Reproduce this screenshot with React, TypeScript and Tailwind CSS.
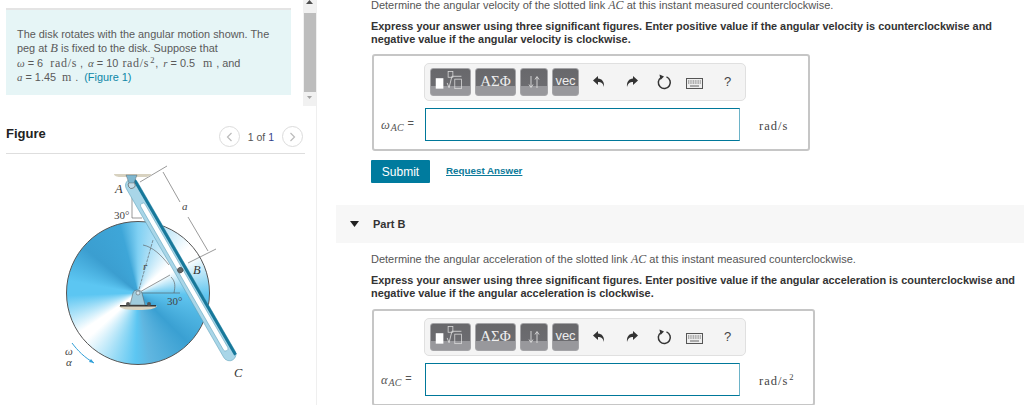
import React from "react";

const M = ({ children }: { children: React.ReactNode }) => (
  <span className="font-['Liberation_Serif',serif] italic">{children}</span>
);
const U = ({ children, cls }: { children: React.ReactNode; cls?: string }) => (
  <span className={`font-['Liberation_Serif',serif] text-[12px] tracking-[0.7px] ${cls ?? ""}`}>{children}</span>
);
const BigU = ({ children }: { children: React.ReactNode }) => (
  <span className="font-['Liberation_Serif',serif] text-[12.500px] tracking-[1px]">{children}</span>
);

function ToolBtn({ w, children }: { w: string; children: React.ReactNode }) {
  return (
    <div className={`${w} relative h-[28px] rounded-[3px] border border-[#a5a5a8] overflow-hidden bg-[linear-gradient(#68686b_0,#6c6c70_66%,#98989c_67%,#98989c_100%)] flex items-center justify-center text-[#eee] shrink-0`}>
      {children}
    </div>
  );
}

function Toolbar() {
  return (
    <div className="ml-[50px] w-[322px] h-[38px] rounded-[5px] border border-[#e0e0e0] bg-[#f4f4f4] flex items-center pl-[5px]">
      <div className="flex gap-[4px]">
        <ToolBtn w="w-[41px]">
          <svg width="41" height="28" viewBox="0 0 41 28">
            <rect x="5" y="10" width="8" height="11" fill="#fff" />
            <rect x="18" y="3" width="5" height="6" fill="none" stroke="#ddd" strokeWidth="0.8" />
            <path d="M17 15 l2 5 l3 -12 h10" fill="none" stroke="#ddd" strokeWidth="0.9" />
            <rect x="25" y="11" width="7" height="10" fill="none" stroke="#ddd" strokeWidth="0.8" />
          </svg>
        </ToolBtn>
        <ToolBtn w="w-[41px]">
          <span className="font-['Liberation_Serif',serif] text-[15px] -mt-[2px]">ΑΣΦ</span>
        </ToolBtn>
        <ToolBtn w="w-[28px]">
          <svg width="14" height="14" viewBox="0 0 14 14" fill="none" stroke="#ddd" strokeWidth="0.9">
            <path d="M4 1v11M2 9.500 4 12.500 6 9.500M10 13V2M8 4.500 10 1.500 12 4.500" />
          </svg>
        </ToolBtn>
        <ToolBtn w="w-[27px]">
          <span className="font-['Liberation_Sans',sans-serif] text-[13px] -mt-[3px]">vec</span>
        </ToolBtn>
      </div>
      <svg width="14" height="14" viewBox="0 0 14 14" className="ml-[13px]">
        <path d="M6 1 1 5.500 6 10V7c3 0 5 1 6 5 .5-5-2-8.500-6-8.500z" fill="#333" />
      </svg>
      <svg width="14" height="14" viewBox="0 0 14 14" className="ml-[19px]">
        <path d="M8 1l5 4.500L8 10V7c-3 0-5 1-6 5-.5-5 2-8.500 6-8.500z" fill="#333" />
      </svg>
      <svg width="16" height="16" viewBox="0 0 16 16" className="ml-[17px]" fill="none">
        <path d="M5 3.500a6 6 0 1 0 5.500-.6" stroke="#333" strokeWidth="1.500" />
        <path d="M3.500 0.500 8 2.500 4.500 6z" fill="#333" />
      </svg>
      <svg width="17" height="11" viewBox="0 0 17 11" className="ml-[14px] mt-[2px]">
        <rect x="0.500" y="0.500" width="16" height="10" fill="#eee" stroke="#555" />
        <path d="M2 3h13M2 5h13" stroke="#666" strokeDasharray="1 0.700" />
        <path d="M4 8h9" stroke="#666" />
      </svg>
      <span className="ml-[21px] font-['Liberation_Sans',sans-serif] text-[13px] text-[#444]">?</span>
    </div>
  );
}

function AnswerBox({ w, sym, unit }: { w: string; sym: string; unit: React.ReactNode }) {
  return (
    <div className={`${w} h-[97px] ml-px rounded-[3px] border-2 border-[#c6c6c6] pt-[7px] bg-white shrink-0`}>
      <Toolbar />
      <div className="flex items-center mt-[7px]">
        <div className="w-[51px] pl-[7px] text-[11px] text-[#555] whitespace-nowrap">
          <span className="font-['Liberation_Serif',serif] italic text-[12.500px]">{sym}</span>
          <span className="font-['Liberation_Serif',serif] italic text-[10px] align-[-2px] ml-[1px]">AC</span>
          <span className="ml-[4px] align-[2px]">=</span>
        </div>
        <div className="w-[315px] h-[33px] border border-[#00789a] border-r-[#6db3c8]" />
        <div className="ml-[19px] whitespace-nowrap text-[#444]">{unit}</div>
      </div>
    </div>
  );
}

function Figure() {
  const serif = { fontFamily: "'Liberation Serif', serif" };
  return (
    <div className="relative ml-[44px] mt-[6px] w-[220px] h-[245px]">
      <div className="absolute left-[16px] top-[61px] w-[144px] h-[144px] rounded-full border border-[#555] bg-[conic-gradient(#7fd0f3_0deg,#9edaf5_10deg,#ffffff_48deg,#ffffff_58deg,#60c5ef_92deg,#3aa0d2_135deg,#60b6e0_170deg,#5cc6f2_182deg,#9adcf6_200deg,#ffffff_228deg,#ffffff_236deg,#5cc6f2_268deg,#5cc6f2_280deg,#3b9ed0_310deg,#3ea6d8_345deg,#7fd0f3_360deg)]" />
      <svg width="220" height="245" viewBox="0 0 220 245" className="absolute left-0 top-0">
        <g fill="none" stroke="#555" strokeWidth="0.600">
          <path d="M90 22 117 6M138 103 166 89M113 12 130 42M138 57 158 91" />
          <path d="M82 28V58H92M88 133H130M88 133 120 115M93 85c10 2 18 10 26 20M121 117c5 5 4 10 3 16" />
          <path d="M88 133 103 80" strokeDasharray="3 1" />
        </g>
        <g transform="translate(81.700 25) rotate(-30)">
          <rect x="-6.500" y="-6" width="13" height="208" rx="6.500" fill="#a9d6e8" stroke="#5b9fb8" strokeWidth="0.500" />
          <rect x="3.500" y="-3" width="3" height="202" fill="#17789a" />
          <rect x="-3" y="21" width="5" height="170" rx="2.500" fill="#fff" stroke="#5b9fb8" strokeWidth="0.500" />
          <circle r="3.500" fill="#c5dde8" stroke="#555" strokeWidth="0.600" />
          <circle cy="98" cx="-0.500" r="2.800" fill="#666" stroke="#333" strokeWidth="0.500" />
        </g>
        <path d="M64 14h37c0 2-3 3-6 3H70c-3 0-6-1-6-3z" fill="#d8d2c0" />
        <path d="M76 15h11l-3 8h-5z" fill="#7fb7cf" stroke="#555" strokeWidth="0.400" />
        <path d="M69 146h38c-2 3-8 4-19 4s-17-1-19-4z" fill="#d8d2c0" />
        <rect x="70" y="145" width="36" height="1.500" fill="#333" />
        <path d="M80 145l3-12c1-4 8-4 9 0l3 12z" fill="#9fcbdd" stroke="#555" strokeWidth="0.500" />
        <circle cx="88" cy="133" r="2" fill="#d5e6ee" stroke="#555" strokeWidth="0.500" />
        <circle cx="78" cy="144" r="2" fill="#555" />
        <circle cx="99" cy="144" r="2" fill="#555" />
        <path d="M22 183C28 191 34 197 44 203" fill="none" stroke="#2f9fd8" strokeWidth="1" />
        <path d="M44 203l-5-1 2-3z" fill="#2f9fd8" />
        <g style={serif} fontStyle="italic" fill="#444">
          <text x="65" y="33" fontSize="12.500" fill="#333">A</text>
          <text x="143" y="114" fontSize="12.500" fill="#333">B</text>
          <text x="184" y="217" fontSize="12.500" fill="#333">C</text>
          <text x="132" y="50" fontSize="11" >a</text>
          <text x="93" y="110" fontSize="11" >r</text>
          <text x="15" y="195" fontSize="11" >ω</text>
          <text x="16" y="206" fontSize="11" >α</text>
        </g>
        <g style={serif} fill="#444" fontSize="11">
          <text x="64" y="59">30°</text>
          <text x="117" y="145">30°</text>
        </g>
      </svg>
    </div>
  );
}

export default function App() {
  return (
    <div className="w-[1024px] h-[405px] overflow-hidden flex bg-white font-['Liberation_Sans',sans-serif] text-[#555]">
      <div className="w-[303px] shrink-0 pl-[6px]">
        <div className="mt-[8px] w-[285px] h-[87px] border-t-2 border-[#e4e4e4] bg-[#e6f5f6] pl-[11px] pt-[18px] text-[10.900px] text-[#5a5a5a]">
          <div className="whitespace-nowrap h-[13px] leading-[13px]">The disk rotates with the angular motion shown. The</div>
          <div className="whitespace-nowrap h-[15px] leading-[15px]">peg at <M><span className="text-[12.500px]">B</span></M> is fixed to the disk. Suppose that</div>
          <div className="whitespace-nowrap h-[14px] leading-[14px]">
            <M>ω</M> = 6 <U cls="ml-[4px]">rad/s</U> , <span className="ml-[2px]"><M>α</M></span> = 10 <U cls="ml-[1px]">rad/s<sup className="text-[8.500px] ml-[1px]">2</sup></U>, <span className="ml-[2px]"><M>r</M></span> = 0.5 <U cls="ml-[5px]">m</U> , and
          </div>
          <div className="whitespace-nowrap h-[14px] leading-[14px]">
            <M>a</M> = 1.45 <U cls="ml-[3px]">m</U> . <span className="text-[#0d87a8] ml-[3px]">(Figure 1)</span>
          </div>
        </div>
        <div className="mt-[25px] w-[299px] h-[34px] flex items-start justify-between border-b border-[#dedede]">
          <div className="text-[13px] font-bold text-[#222] mt-[4px]">Figure</div>
          <div className="flex items-center mr-[2px] mt-[6px]">
            <div className="w-[21px] h-[21px] rounded-full border border-[#dcdcdc] flex items-center justify-center">
              <svg width="7" height="10" viewBox="0 0 7 10" fill="none" stroke="#bbb" strokeWidth="1.200"><path d="M5.500 1 1.500 5l4 4" /></svg>
            </div>
            <span className="mx-[8px] text-[10.500px] text-[#555] mt-[2px]">1 of <span className="text-[#33428a]">1</span></span>
            <div className="w-[21px] h-[21px] rounded-full border border-[#dcdcdc] flex items-center justify-center">
              <svg width="7" height="10" viewBox="0 0 7 10" fill="none" stroke="#bbb" strokeWidth="1.200"><path d="M1.500 1l4 4-4 4" /></svg>
            </div>
          </div>
        </div>
        <Figure />
      </div>

      <div className="w-[13px] h-[106px] shrink-0 bg-[#f1f1f1] flex flex-col items-center">
        <svg width="9" height="13" viewBox="0 0 9 13" className="shrink-0"><path d="M4.500 0 8 4H1z" fill="#505050" /></svg>
        <div className="w-[12px] h-[79px] bg-[#bdbdbd]" />
        <svg width="9" height="14" viewBox="0 0 9 14" className="shrink-0"><path d="M2 4h5L4.500 7z" fill="#a3a3a3" /></svg>
      </div>

      <div className="w-[708px] shrink-0 border-l border-[#efefef]">
        <div className="pl-[54px] -mt-[2px]">
          <p className="text-[11px] leading-[14px] whitespace-nowrap">
            Determine the angular velocity of the slotted link <M><span className="text-[12px]">AC</span></M> at this instant measured counterclockwise.
          </p>
          <p className="mt-[8px] text-[10.900px] leading-[13px] font-bold text-[#333] w-[640px]">
            Express your answer using three significant figures. Enter positive value if the angular velocity is counterclockwise and negative value if the angular velocity is clockwise.
          </p>
          <div className="mt-[8px]">
            <AnswerBox w="w-[438px]" sym="ω" unit={<BigU>rad/s</BigU>} />
          </div>
          <div className="mt-[9px] flex items-center">
            <div className="w-[59px] h-[23px] bg-[#007b9e] rounded-[1px] text-white text-[12px] flex items-center justify-center">Submit</div>
            <div className="ml-[16px] text-[9.800px] font-bold text-[#0d7a9a] underline -mt-[1px]">Request Answer</div>
          </div>
        </div>
        <div className="mt-[22px] h-[38px] ml-[19px] bg-[#f7f7f7] flex items-center">
          <svg width="9" height="6" viewBox="0 0 9 6" className="ml-[14px]"><path d="M0 0h9L4.500 6z" fill="#222" /></svg>
          <span className="ml-[14px] text-[11px] font-bold text-[#333]">Part B</span>
        </div>
        <div className="pl-[54px]">
          <p className="mt-[9px] text-[11px] leading-[14px] whitespace-nowrap">
            Determine the angular acceleration of the slotted link <M><span className="text-[12px]">AC</span></M> at this instant measured counterclockwise.
          </p>
          <p className="mt-[8px] text-[10.900px] leading-[13px] font-bold text-[#333] w-[650px]">
            Express your answer using three significant figures. Enter positive value if the angular acceleration is counterclockwise and negative value if the angular acceleration is clockwise.
          </p>
          <div className="mt-[9px]">
            <AnswerBox w="w-[443px]" sym="α" unit={<BigU>rad/s<sup className="text-[8.500px] ml-[1px]">2</sup></BigU>} />
          </div>
        </div>
      </div>
    </div>
  );
}
